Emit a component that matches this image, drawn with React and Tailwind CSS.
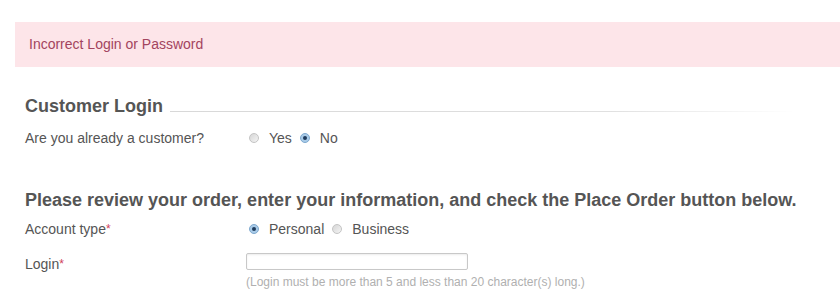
import React from 'react';

const Radio = ({ checked }) =>
    checked ? (
        <span className="inline-flex items-center justify-center w-[10px] h-[10px] rounded-full bg-[#a9cbe8] border border-[#7fa9cf]">
            <span className="w-[4px] h-[4px] rounded-full bg-[#1f3b5c]" />
        </span>
    ) : (
        <span className="inline-block w-[10px] h-[10px] rounded-full border border-[#c4c4c4] bg-gradient-to-br from-[#d6d6d6] to-[#f4f4f4]" />
    );

const Option = ({ label, checked, first }) => (
    <span className={`flex items-center ${first ? 'ml-[3px]' : 'ml-[8px]'}`}>
        <Radio checked={checked} />
        <span className="ml-[10px]">{label}</span>
    </span>
);

const Req = () => <span className="text-[#d0405a] text-[12px] align-top">*</span>;

export default function App() {
    return (
        <div className="w-[840px] h-[307px] overflow-hidden bg-white text-[14px] text-[#555] font-['Liberation_Sans',Arial,sans-serif]">
            <div className="pt-[22px]">
                <div className="ml-[15px] h-[45px] bg-[#fde5e9] flex items-center pl-[14px] text-[#a3445e]">
                    Incorrect Login or Password
                </div>
            </div>

            <div className="mt-[29px] h-[20px] flex items-end pl-[25px] pr-[45px]">
                <span className="text-[18px] leading-[20px] font-bold text-[#555]">Customer Login</span>
                <span className="flex-1 ml-[7px] mb-[4px] h-px bg-gradient-to-r from-[#d8d8d8] via-[#e0e0e0] via-70% to-transparent" />
            </div>

            <div className="mt-[14px] h-[16px] flex items-center pl-[25px] leading-[16px]">
                <span className="w-[221px]">Are you already a customer?</span>
                <Option label="Yes" first />
                <Option label="No" checked />
            </div>

            <h2 className="mt-[44px] pl-[25px] text-[18px] leading-[20px] font-bold text-[#555]">
                Please review your order, enter your information, and check the Place Order button below.
            </h2>

            <div className="mt-[11px] h-[16px] flex items-center pl-[25px] leading-[16px]">
                <span className="w-[221px]">Account type<Req /></span>
                <Option label="Personal" checked first />
                <Option label="Business" />
            </div>

            <div className="mt-[16px] flex items-start pl-[25px] leading-[16px]">
                <span className="w-[221px] pt-[3px]">Login<Req /></span>
                <div className="flex flex-col">
                    <input
                        type="text"
                        className="w-[222px] h-[17px] border border-[#c8c8c8] rounded-[2px] bg-white shadow-[inset_0_1px_2px_rgba(0,0,0,0.08)] outline-none"
                    />
                    <span className="mt-[5px] text-[12px] leading-[14px] text-[#b0b0b0]">
                        (Login must be more than 5 and less than 20 character(s) long.)
                    </span>
                </div>
            </div>
        </div>
    );
}
